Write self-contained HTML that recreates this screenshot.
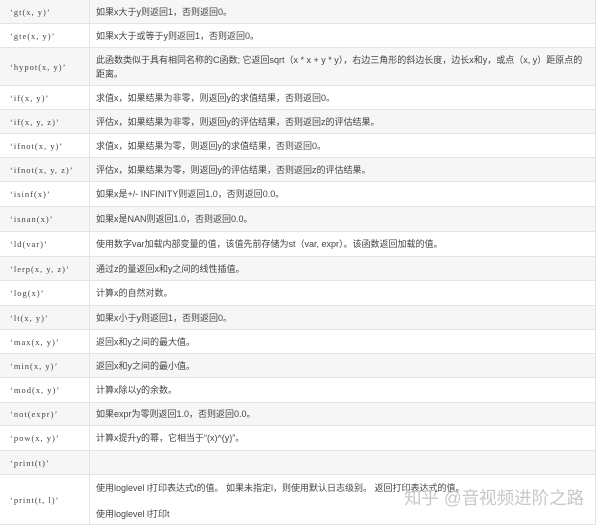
<!DOCTYPE html>
<html><head><meta charset="utf-8"><style>
html,body{margin:0;padding:0;background:#fff;width:600px;height:526px;overflow:hidden}
.r{position:absolute;left:0;width:596px;border-bottom:1px solid #e4e4e4;box-sizing:border-box;border-right:1px solid #e4e4e4}
.g{background:#f6f6f6}
.l,.c{position:absolute;top:0;bottom:0;display:flex;align-items:center;font-size:9px;color:#444;white-space:nowrap}
.l{left:10px;font-family:"Liberation Serif","Noto Serif CJK SC",serif;font-size:8.5px;letter-spacing:1px}
.c{left:96px;right:6px;font-family:"Liberation Sans","Noto Sans CJK SC",sans-serif;line-height:14px;white-space:normal}
.d{position:absolute;left:89px;top:0;width:1px;height:524px;background:#e4e4e4}
.wm{position:absolute;left:404px;top:485px;font-size:17.5px;color:#c8c8c8;font-family:"Liberation Sans","Noto Sans CJK SC",sans-serif;white-space:nowrap}
</style></head><body>
<div class="r g" style="top:0;height:24px"><div class="l">‘gt(x, y)’</div><div class="c">如果x大于y则返回1，否则返回0。</div></div>
<div class="r" style="top:24px;height:24px"><div class="l">‘gte(x, y)’</div><div class="c">如果x大于或等于y则返回1，否则返回0。</div></div>
<div class="r g" style="top:48px;height:38px"><div class="l">‘hypot(x, y)’</div><div class="c">此函数类似于具有相同名称的C函数; 它返回sqrt（x * x + y * y），右边三角形的斜边长度，边长x和y，或点（x, y）距原点的距离。</div></div>
<div class="r" style="top:86px;height:24px"><div class="l">‘if(x, y)’</div><div class="c">求值x，如果结果为非零，则返回y的求值结果，否则返回0。</div></div>
<div class="r g" style="top:110px;height:24px"><div class="l">‘if(x, y, z)’</div><div class="c">评估x，如果结果为非零，则返回y的评估结果，否则返回z的评估结果。</div></div>
<div class="r" style="top:134px;height:24px"><div class="l">‘ifnot(x, y)’</div><div class="c">求值x，如果结果为零，则返回y的求值结果，否则返回0。</div></div>
<div class="r g" style="top:158px;height:24px"><div class="l">‘ifnot(x, y, z)’</div><div class="c">评估x，如果结果为零，则返回y的评估结果，否则返回z的评估结果。</div></div>
<div class="r" style="top:182px;height:25px"><div class="l">‘isinf(x)’</div><div class="c">如果x是+/- INFINITY则返回1.0，否则返回0.0。</div></div>
<div class="r g" style="top:207px;height:25px"><div class="l">‘isnan(x)’</div><div class="c">如果x是NAN则返回1.0，否则返回0.0。</div></div>
<div class="r" style="top:232px;height:25px"><div class="l">‘ld(var)’</div><div class="c">使用数字var加载内部变量的值，该值先前存储为st（var, expr）。该函数返回加载的值。</div></div>
<div class="r g" style="top:257px;height:24px"><div class="l">‘lerp(x, y, z)’</div><div class="c">通过z的量返回x和y之间的线性插值。</div></div>
<div class="r" style="top:281px;height:25px"><div class="l">‘log(x)’</div><div class="c">计算x的自然对数。</div></div>
<div class="r g" style="top:306px;height:24px"><div class="l">‘lt(x, y)’</div><div class="c">如果x小于y则返回1，否则返回0。</div></div>
<div class="r" style="top:330px;height:24px"><div class="l">‘max(x, y)’</div><div class="c">返回x和y之间的最大值。</div></div>
<div class="r g" style="top:354px;height:24px"><div class="l">‘min(x, y)’</div><div class="c">返回x和y之间的最小值。</div></div>
<div class="r" style="top:378px;height:25px"><div class="l">‘mod(x, y)’</div><div class="c">计算x除以y的余数。</div></div>
<div class="r g" style="top:403px;height:23px"><div class="l">‘not(expr)’</div><div class="c">如果expr为零则返回1.0，否则返回0.0。</div></div>
<div class="r" style="top:426px;height:25px"><div class="l">‘pow(x, y)’</div><div class="c">计算x提升y的幂，它相当于“(x)^(y)”。</div></div>
<div class="r g" style="top:451px;height:24px"><div class="l">‘print(t)’</div><div class="c"></div></div>
<div class="r" style="top:475px;height:50px"><div class="l">‘print(t, l)’</div>
<div class="c" style="display:block;top:0"><div style="position:absolute;top:6px">使用loglevel l打印表达式t的值。 如果未指定l，则使用默认日志级别。 返回打印表达式的值。</div><div style="position:absolute;top:32px">使用loglevel l打印t</div></div></div>
<div class="d"></div>
<div class="wm">知乎 @音视频进阶之路</div>
</body></html>
